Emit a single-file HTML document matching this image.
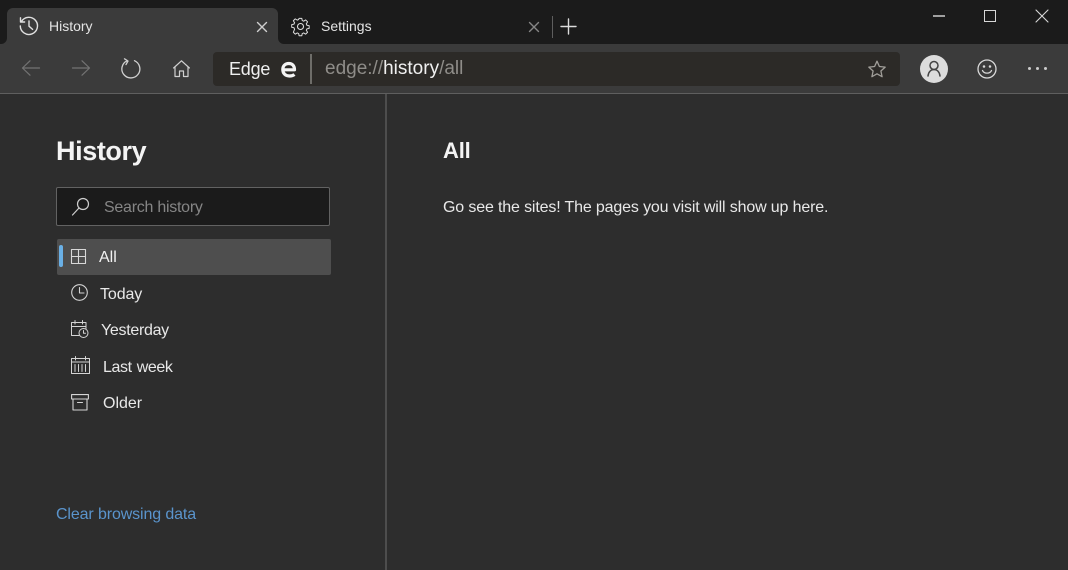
<!DOCTYPE html>
<html><head><meta charset="utf-8"><title>History</title>
<style>
html,body{margin:0;padding:0;background:#2d2d2d}
body{width:1068px;height:570px;position:relative;overflow:hidden;font-family:"Liberation Sans",sans-serif;color:#eee}
.t{position:absolute;white-space:nowrap;line-height:20px}
.n{font-size:16px;color:#e8e8e8}
.b{position:absolute}
svg{position:absolute;overflow:visible;fill:none;stroke-linecap:round;stroke-linejoin:round}
</style></head><body>
<div class="b" style="left:0;top:0;width:1068px;height:44px;background:#1b1b1b"></div>
<div class="b" style="left:1px;top:38px;width:283px;height:6px;background:#3b3b3b"></div>
<div class="b" style="left:1px;top:38px;width:6px;height:6px;background:#1b1b1b;border-radius:0 0 6px 0"></div>
<div class="b" style="left:278px;top:38px;width:6px;height:6px;background:#1b1b1b;border-radius:0 0 0 6px"></div>
<div class="b" style="left:7px;top:8px;width:271px;height:36px;background:#3b3b3b;border-radius:6px 6px 0 0"></div>
<div class="b" style="left:0;top:44px;width:1068px;height:49px;background:#3b3b3b"></div>
<div class="b" style="left:0;top:93px;width:1068px;height:1px;background:#5f5f5f"></div>
<div class="b" style="left:213px;top:52px;width:687px;height:34px;background:#2c2a27;border-radius:4px"></div>
<div class="b" style="left:385px;top:94px;width:2px;height:476px;background:#4d4d4d"></div>

<svg style="left:19px;top:16px" width="20" height="20" stroke="#e0e0e0" stroke-width="1.400"><path d="M2.500 5.500A8.600 8.600 0 1 1 1.300 10M1.500 1.800V6H5.600M10 5v5.200l3.600 3.200"/></svg>
<div class="t" style="left:49px;top:16px;font-size:14px;color:#e4e4e4">History</div>
<svg style="left:257px;top:22px" width="10" height="10" stroke="#cfcfcf" stroke-width="1.400"><path d="M.5.500l9 9M9.500.5l-9 9"/></svg>
<svg style="left:291px;top:17px" width="19" height="19" stroke="#dedede" stroke-width="1.100"><circle cx="9.500" cy="9.500" r="3"/><path d="M8 .8h3l.5 2.500 1.600.7 2.200-1.400 2.100 2.100-1.400 2.200.7 1.600 2.500.5v3l-2.500.5-.7 1.600 1.400 2.200-2.100 2.100-2.200-1.400-1.600.7-.5 2.500H8l-.5-2.500-1.600-.7-2.200 1.400-2.100-2.100L3 12.900l-.7-1.600L-.2 10.800V7.800l2.500-.5.700-1.600L1.600 3.500l2.100-2.100 2.200 1.400 1.600-.7z" transform="translate(.9 .6) scale(.9)"/></svg>
<div class="t" style="left:321px;top:16px;font-size:14px;color:#e4e4e4">Settings</div>
<svg style="left:529px;top:22px" width="10" height="10" stroke="#858585" stroke-width="1.400"><path d="M.5.500l9 9M9.500.5l-9 9"/></svg>
<div class="b" style="left:552px;top:16px;width:1px;height:22px;background:#5e5e5e"></div>
<svg style="left:561px;top:19px" width="15" height="15" stroke="#dcdcdc" stroke-width="1.400"><path d="M7.500 0v15M0 7.500h15"/></svg>
<div class="b" style="left:933px;top:15px;width:12px;height:1.500px;background:#a0a0a0"></div>
<div class="b" style="left:984px;top:10px;width:10px;height:10px;border:1px solid #d8d8d8"></div>
<svg style="left:1036px;top:10px" width="12" height="12" stroke="#d8d8d8" stroke-width="1.100"><path d="M0 0l12 12M12 0L0 12"/></svg>

<svg style="left:22px;top:60px" width="18" height="16" stroke="#737373" stroke-width="1.200"><path d="M.5 8h17M8 .8L.5 8l7.500 7.200"/></svg>
<svg style="left:72px;top:60px" width="18" height="16" stroke="#737373" stroke-width="1.200"><path d="M.5 8h17M10 .8L17.500 8 10 15.200"/></svg>
<svg style="left:121px;top:58px" width="20" height="21" stroke="#d0d0d0" stroke-width="1.300"><path d="M6 2.800A9 9 0 1 0 13.500 2.700M3.500 .8L7 3 5 6.600"/></svg>
<svg style="left:173px;top:60px" width="17" height="17" stroke="#d0d0d0" stroke-width="1.200"><path d="M.6 8L8.500 .8 16.400 8M2 7V16.500H6.500v-5.500h4v5.500H15V7"/></svg>
<div class="t" style="left:229px;top:59px;font-size:18px;color:#efefef;letter-spacing:-.2px">Edge</div>
<svg style="left:281px;top:62px" width="15" height="15" stroke="#f4f4f4" stroke-width="3.200" stroke-linecap="butt"><path d="M13.500 12.500C12 13.700 10 14 8.500 14 4.500 14 1.800 11.500 1.800 7.500 1.800 3.500 4.500 1.500 7.800 1.500 11 1.500 13.500 3.500 13.500 7.800H3" stroke-linecap="butt"/></svg>
<div class="b" style="left:310px;top:54px;width:2px;height:30px;background:#6e6d69"></div>
<div class="t" style="left:325px;top:59px;font-size:19px;color:#8f8d89">edge://<span style="color:#f0f0f0">history</span>/all</div>
<svg style="left:868px;top:60px" width="18" height="18" stroke="#a09e99" stroke-width="1.300"><path d="M9 1.200l2.400 5.300 5.800.6-4.300 3.900 1.200 5.700L9 13.800l-5.100 2.900 1.200-5.700L.8 7.100l5.800-.6z"/></svg>
<div class="b" style="left:920px;top:55px;width:28px;height:28px;border-radius:50%;background:#dcdcdc"></div>
<svg style="left:926px;top:60px" width="16" height="17" stroke="#444" stroke-width="1.500"><circle cx="8" cy="5.500" r="4"/><path d="M2 16c.5-4 2.800-6.500 6-6.500s5.500 2.500 6 6.500"/></svg>
<svg style="left:977px;top:59px" width="20" height="20" stroke="#d8d8d8" stroke-width="1.300"><circle cx="10" cy="10" r="9"/><path d="M5.500 11.500c1.500 3.500 7.500 3.500 9 0"/><circle cx="7" cy="7.500" r=".6"/><circle cx="13" cy="7.500" r=".6"/></svg>
<div class="b" style="left:1028px;top:67px;width:3px;height:3px;border-radius:50%;background:#cccccc;box-shadow:8px 0 #cccccc,16px 0 #cccccc"></div>

<div class="t" style="left:56px;top:136px;font-size:27px;line-height:30px;font-weight:bold;color:#f4f4f4;letter-spacing:-.4px">History</div>
<div class="b" style="left:56px;top:187px;width:272px;height:37px;background:#1b1b1b;border:1px solid #626262;border-radius:2px"></div>
<svg style="left:71px;top:197px" width="19" height="19" stroke="#cfcfcf" stroke-width="1.200"><circle cx="12" cy="7" r="5.500"/><path d="M8 11L1.500 18"/></svg>
<div class="t n" style="left:104px;top:198px;color:#858585;letter-spacing:-.26px">Search history</div>

<div class="b" style="left:57px;top:239px;width:274px;height:36px;background:#4e4e4e;border-radius:2px"></div>
<div class="b" style="left:59px;top:245px;width:4px;height:22px;background:#6ab0e6;border-radius:2px"></div>
<svg style="left:71px;top:249px" width="15" height="15" stroke="#d8d8d8" stroke-width="1.100"><path d="M.5.500h14v14H.500zM7.500.500v14M.500 7.500h14"/></svg>
<div class="t n" style="left:99px;top:248px;color:#f2f2f2">All</div>

<svg style="left:71px;top:284px" width="17" height="17" stroke="#d4d4d4" stroke-width="1.100"><circle cx="8.500" cy="8.500" r="7.800"/><path d="M8.500 3.500v5.500h4.500"/></svg>
<div class="t n" style="left:100px;top:285px;letter-spacing:-.1px">Today</div>

<svg style="left:71px;top:320px" width="18" height="19" stroke="#d4d4d4" stroke-width="1"><path d="M8 15.500H.5V2.500h14.500v6M.5 6.500h14.500M4 .5v3.500M11.500.5v3.500"/><circle cx="12.500" cy="13" r="4.500"/><path d="M12.500 10.500v2.700h2"/></svg>
<div class="t n" style="left:101px;top:321px;letter-spacing:-.3px">Yesterday</div>

<svg style="left:71px;top:356px" width="19" height="18" stroke="#d4d4d4" stroke-width="1"><path d="M.5 2.500h18v15H.500zM.500 6h18M4.500.5v3.500M14.500.5v3.500M4 8.500v7M7.500 8.500v7M11 8.500v7M14.500 8.500v7"/></svg>
<div class="t n" style="left:103px;top:358px;letter-spacing:-.4px;word-spacing:1px">Last week</div>

<svg style="left:71px;top:394px" width="18" height="17" stroke="#d4d4d4" stroke-width="1.100"><path d="M.6.600h16.800v4.400H.600zM2 5v11h14V5M6.500 8.500h5"/></svg>
<div class="t n" style="left:103px;top:394px">Older</div>

<div class="t n" style="left:56px;top:505px;color:#5a94cc;letter-spacing:-.12px">Clear browsing data</div>

<div class="t" style="left:443px;top:136px;font-size:22px;line-height:30px;font-weight:bold;color:#f4f4f4;letter-spacing:-.2px">All</div>
<div class="t n" style="left:443px;top:198px;letter-spacing:-.15px">Go see the sites! The pages you visit will show up here.</div>
</body></html>
